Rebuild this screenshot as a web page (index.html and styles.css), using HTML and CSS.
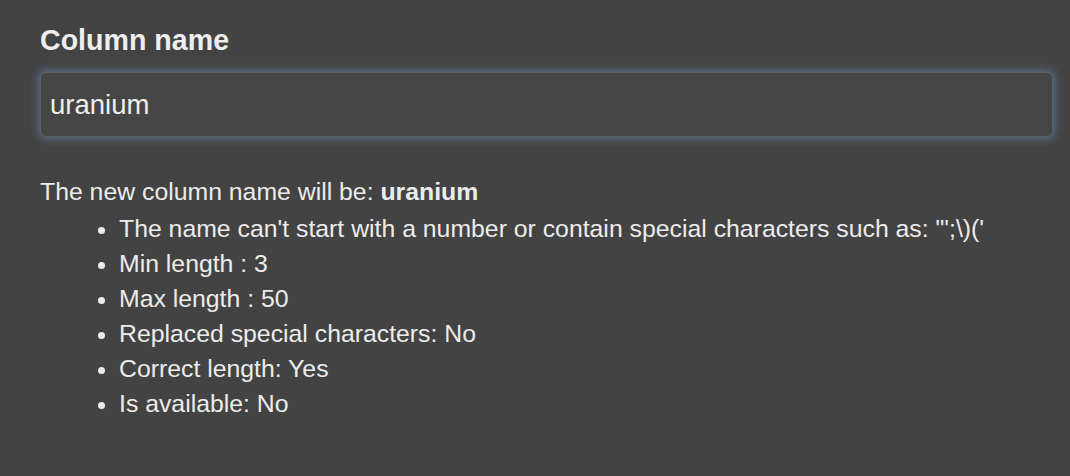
FILE: index.html
```html
<!DOCTYPE html>
<html>
<head>
<meta charset="utf-8">
<link rel="stylesheet" href="styles.css">
</head>
<body>
<div class="panel">
  <label class="field-label" for="colname">Column name</label>
  <input id="colname" class="field-input" type="text" value="uranium">
  <div class="info">
    <p class="info-title">The new column name will be: <strong>uranium</strong></p>
    <ul class="rules">
      <li>The name can't start with a number or contain special characters such as: "';\)('</li>
      <li>Min length : 3</li>
      <li>Max length : 50</li>
      <li>Replaced special characters: No</li>
      <li>Correct length: Yes</li>
      <li>Is available: No</li>
    </ul>
  </div>
</div>
</body>
</html>
```
FILE: styles.css
```css
html, body {
  margin: 0;
  padding: 0;
  background: #434343;
}
body {
  width: 1070px;
  height: 476px;
  overflow: hidden;
  font-family: "Liberation Sans", Arial, Helvetica, sans-serif;
  color: #ececec;
}
.panel {
  padding: 24px 17px 0 40px;
  display: flex;
  flex-direction: column;
}
.field-label {
  display: block;
  font-size: 28.6px;
  font-weight: bold;
  line-height: 32px;
  color: #eeeeee;
  margin-bottom: 16px;
}
.field-input {
  box-sizing: border-box;
  width: 100%;
  height: 65px;
  margin: 0;
  padding: 0 9px;
  background: #454545;
  border: 1px solid #5e6062;
  border-radius: 6px;
  box-shadow: 0 0 8px 2px rgba(105, 140, 185, 0.6);
  font-family: "Liberation Sans", Arial, Helvetica, sans-serif;
  font-size: 27.5px;
  color: #eeeeee;
  outline: none;
}
.info {
  margin-top: 37px;
  font-size: 24.8px;
  line-height: 35px;
}
.info-title {
  margin: 0;
}
.info-title strong {
  font-weight: bold;
}
.rules {
  margin: 2px 0 0;
  padding-left: 79px;
}
.rules li {
  margin: 0;
}
```
